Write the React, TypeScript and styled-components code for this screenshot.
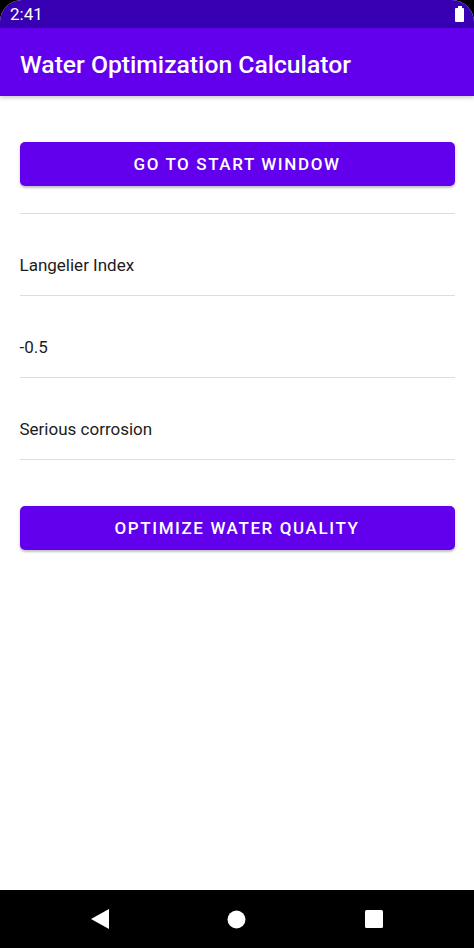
import React from "react";
import styled, { createGlobalStyle } from "styled-components";

const Global = createGlobalStyle`
  html, body { margin: 0; padding: 0; background: #000; }
  body { font-family: Roboto, "Noto Sans", sans-serif; }
  * { box-sizing: border-box; }
`;

const Screen = styled.div`
  width: 474px;
  height: 948px;
  display: flex;
  flex-direction: column;
  background: #fff;
  border-radius: 22px 22px 0 0;
  overflow: hidden;
`;

const StatusBar = styled.div`
  height: 28px;
  flex: none;
  background: #3700b3;
  color: #fff;
  display: flex;
  align-items: center;
  justify-content: space-between;
  padding: 0 10px 0 10px;
  font-size: 17px;
`;

const Battery = styled.div`
  position: relative;
  width: 9px;
  height: 14px;
  background: #fff;
  border-radius: 1px;
  margin-top: 1px;
  &::before {
    content: "";
    position: absolute;
    top: -2px;
    left: 2.5px;
    width: 4px;
    height: 2px;
    background: #fff;
  }
`;

const AppBar = styled.div`
  height: 68px;
  flex: none;
  background: #6200ee;
  color: #fff;
  display: flex;
  align-items: center;
  padding: 4px 20px 0;
  font-size: 24.7px;
  font-weight: 500;
  box-shadow: 0 2px 4px rgba(0, 0, 0, 0.2);
  position: relative;
  z-index: 1;
`;

const Content = styled.div`
  flex: 1;
  display: flex;
  flex-direction: column;
  padding: 46px 19.5px 0;
`;

const Button = styled.button<{ $top?: number }>`
  height: 44px;
  margin-top: ${(p) => p.$top ?? 0}px;
  width: 100%;
  border: none;
  border-radius: 5px;
  background: #6200ee;
  color: #fff;
  font-family: Roboto, sans-serif;
  font-weight: 500;
  font-size: 17px;
  letter-spacing: 1.6px;
  text-transform: uppercase;
  box-shadow: 0 2px 2px rgba(0, 0, 0, 0.18), 0 1px 4px rgba(0, 0, 0, 0.1);
  padding: 0;
`;

const Field = styled.div<{ $empty?: boolean }>`
  padding: ${(p) => (p.$empty ? "0" : "41px 0 20px")};
  height: ${(p) => (p.$empty ? "27.5px" : "auto")};
  line-height: 20px;
  font-size: 17px;
  color: #1c1c1c;
  border-bottom: 1.5px solid #dedede;
`;

const NavBar = styled.div`
  height: 58px;
  flex: none;
  background: #000;
  display: flex;
  align-items: center;
  justify-content: space-between;
  padding: 0 91px 0 90px;
`;

const NavSlot = styled.div`
  width: 19px;
  height: 19px;
  display: flex;
  align-items: center;
  justify-content: center;
`;

export default function App() {
  return (
    <>
      <Global />
      <Screen>
        <StatusBar>
          <span>2:41</span>
          <Battery />
        </StatusBar>
        <AppBar>Water Optimization Calculator</AppBar>
        <Content>
          <Button>Go to start window</Button>
          <Field $empty />
          <Field>Langelier Index</Field>
          <Field>-0.5</Field>
          <Field>Serious corrosion</Field>
          <Button $top={46}>Optimize water quality</Button>
        </Content>
        <NavBar>
          <NavSlot>
            <svg width="18" height="20" viewBox="0 0 18 20">
              <path d="M18 0 L18 20 L0 10 Z" fill="#fff" />
            </svg>
          </NavSlot>
          <NavSlot>
            <svg width="19" height="19" viewBox="0 0 19 19">
              <circle cx="9.5" cy="9.5" r="9" fill="#fff" />
            </svg>
          </NavSlot>
          <NavSlot>
            <svg width="18" height="18" viewBox="0 0 18 18">
              <rect x="0" y="0" width="18" height="18" rx="1.5" fill="#fff" />
            </svg>
          </NavSlot>
        </NavBar>
      </Screen>
    </>
  );
}
